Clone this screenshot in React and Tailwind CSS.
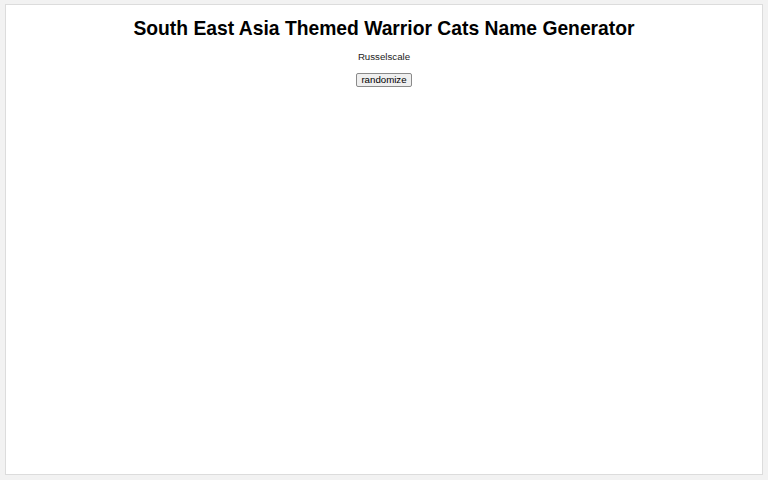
export default function App() {
  return (
    <div className="min-h-[480px] bg-[#f2f2f2] p-[4px_5px_5px_5px] font-['Liberation_Sans',Arial,sans-serif]">
      <div className="flex h-[471px] flex-col items-center border border-[#dcdcdc] bg-white">
        <h1 className="mt-[13px] text-[19.3px] font-bold leading-[22px] text-black">
          South East Asia Themed Warrior Cats Name Generator
        </h1>
        <p className="mt-[11px] text-[9.7px] leading-[12px] text-[#222]">Russelscale</p>
        <button className="mt-[10px] rounded-[2px] border border-[#8a8a8a] bg-[#efefef] px-[4px] text-[9.7px] leading-[12px] text-black">
          randomize
        </button>
      </div>
    </div>
  );
}
